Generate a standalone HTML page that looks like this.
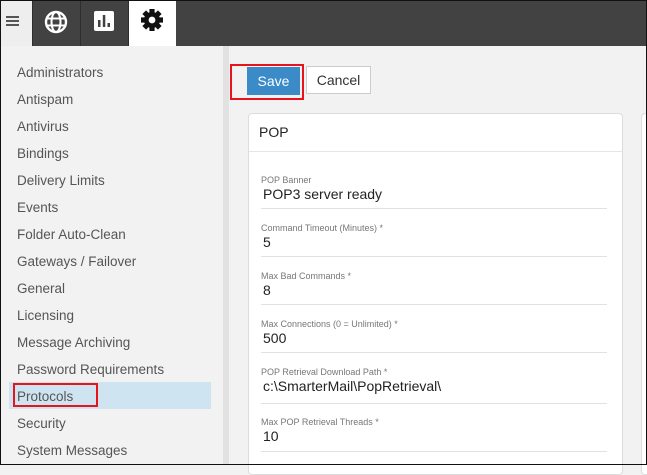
<html><head><style>
body{margin:0;width:647px;height:465px;overflow:hidden;font-family:"Liberation Sans",sans-serif;background:#f2f2f2;position:relative}
.frame{position:absolute;left:0;top:0;width:645px;height:463px;border:1px solid #111;pointer-events:none;z-index:9}
.top{position:absolute;left:0;top:0;width:647px;height:46px;background:#424242}
.ham{position:absolute;left:0;top:0;width:32px;height:46px;background:#eee}
.tab{position:absolute;top:0;width:46px;height:46px;background:#424242;border-left:1px solid #2e2e2e}
.side{position:absolute;left:0;top:46px;width:223px;height:419px;background:#f2f2f2}
.strip{position:absolute;left:223px;top:46px;width:6px;height:419px;background:#e2e2e2}
.side div{position:absolute;left:17px;font-size:13.5px;color:#555}
.card{position:absolute;left:248px;top:113px;width:373px;height:360px;background:#fff;border:1px solid #ddd;border-radius:4px}
.card2{position:absolute;left:641px;top:113px;width:20px;height:360px;background:#fff;border:1px solid #ddd;border-radius:4px}
.lbl{position:absolute;left:261px;font-size:9px;color:#777}
.val{position:absolute;left:263px;font-size:14px;color:#222}
.ln{position:absolute;left:261px;width:346px;height:1px;background:#e2e2e2}
</style></head><body>
<div class="top"></div>
<div class="ham"><div style="position:absolute;left:6px;top:16px;width:13px;height:2px;background:#555;box-shadow:0 4px 0 #555,0 8px 0 #555"></div></div>
<div class="tab" style="left:32px"><svg width="46" height="46" viewBox="0 0 46 46"><circle cx="23" cy="22" r="10" fill="none" stroke="#fff" stroke-width="2.4"/><ellipse cx="23" cy="22" rx="4.5" ry="10" fill="none" stroke="#fff" stroke-width="2"/><line x1="13" y1="18.5" x2="33" y2="18.5" stroke="#fff" stroke-width="2"/><line x1="13" y1="25.5" x2="33" y2="25.5" stroke="#fff" stroke-width="2"/></svg></div>
<div class="tab" style="left:80px"><svg width="46" height="46" viewBox="0 0 46 46"><rect x="13" y="11" width="20" height="20" rx="2" fill="#fff"/><rect x="17" y="20" width="2.5" height="7" fill="#424242"/><rect x="21.8" y="15" width="2.5" height="12" fill="#424242"/><rect x="26.5" y="23" width="2.5" height="4" fill="#424242"/></svg></div>
<div class="tab" style="left:128px;background:#fff;width:47px"><svg width="46" height="46" viewBox="0 0 46 46"><g transform="translate(23,20)"><g fill="#111"><rect x="-2.6" y="-11" width="5.2" height="22"/><rect x="-2.6" y="-11" width="5.2" height="22" transform="rotate(45)"/><rect x="-2.6" y="-11" width="5.2" height="22" transform="rotate(90)"/><rect x="-2.6" y="-11" width="5.2" height="22" transform="rotate(135)"/></g><circle r="8" fill="#111"/><circle r="3.4" fill="#fff"/></g></svg></div>
<div class="side">
<div style="position:absolute;left:9px;top:336px;width:202px;height:27px;background:#cfe4f1"></div>
<div style="top:19px">Administrators</div><div style="top:46px">Antispam</div><div style="top:73px">Antivirus</div><div style="top:100px">Bindings</div><div style="top:127px">Delivery Limits</div><div style="top:154px">Events</div><div style="top:181px">Folder Auto-Clean</div><div style="top:208px">Gateways / Failover</div><div style="top:235px">General</div><div style="top:262px">Licensing</div><div style="top:289px">Message Archiving</div><div style="top:316px">Password Requirements</div><div style="top:343px">Protocols</div><div style="top:370px">Security</div><div style="top:397px">System Messages</div>
<div style="left:13px;top:337px;width:85px;height:24px;border:2px solid #e8141c;box-sizing:border-box"></div>
</div>
<div class="strip"></div>
<div style="position:absolute;left:247px;top:67px;width:53px;height:28px;background:#3a8bc8;color:#fff;font-size:14px;text-align:center;line-height:28px">Save</div>
<div style="position:absolute;left:230px;top:64px;width:74px;height:36px;border:2px solid #e8141c;box-sizing:border-box"></div>
<div style="position:absolute;left:306px;top:66px;width:65px;height:28px;background:#fff;border:1px solid #ccc;box-sizing:border-box;font-size:14px;color:#333;text-align:center;line-height:26px">Cancel</div>
<div class="card"></div><div class="card2"></div>
<div style="position:absolute;left:259px;top:124px;font-size:14px;color:#222">POP</div>
<div style="position:absolute;left:249px;top:151px;width:373px;height:1px;background:#e6e6e6"></div>
<div class="lbl" style="top:175px">POP Banner</div><div class="val" style="top:186px">POP3 server ready</div><div class="ln" style="top:208px"></div>
<div class="lbl" style="top:223px">Command Timeout (Minutes) *</div><div class="val" style="top:234px">5</div><div class="ln" style="top:256px"></div>
<div class="lbl" style="top:271px">Max Bad Commands *</div><div class="val" style="top:282px">8</div><div class="ln" style="top:304px"></div>
<div class="lbl" style="top:319px">Max Connections (0 = Unlimited) *</div><div class="val" style="top:330px">500</div><div class="ln" style="top:352px"></div>
<div class="lbl" style="top:367px">POP Retrieval Download Path *</div><div class="val" style="top:378px">c:\SmarterMail\PopRetrieval\</div><div class="ln" style="top:403px"></div>
<div class="lbl" style="top:417px">Max POP Retrieval Threads *</div><div class="val" style="top:428px">10</div><div class="ln" style="top:451px"></div>
<div class="frame"></div>
</body></html>
